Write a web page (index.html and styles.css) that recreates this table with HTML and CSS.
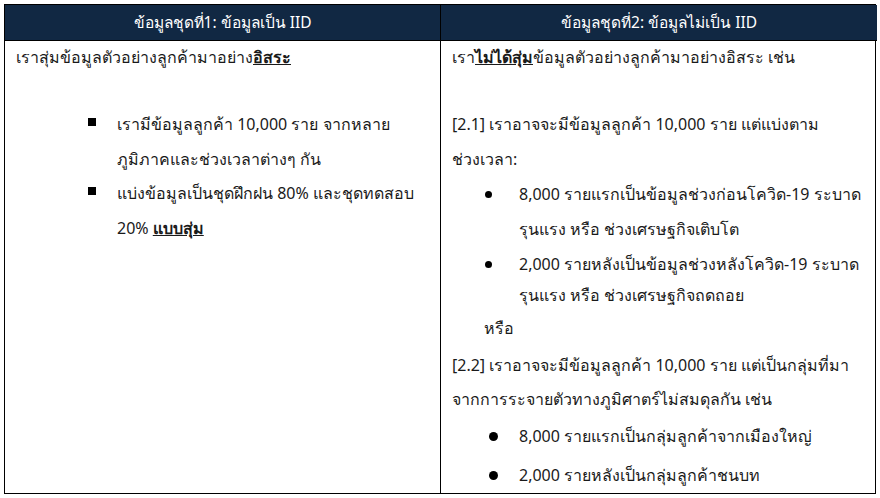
FILE: index.html
```html
<!DOCTYPE html>
<html lang="th">
<head>
<meta charset="utf-8">
<link rel="stylesheet" href="styles.css">
</head>
<body>
<div class="tbl">
  <div class="th th-left">ข้อมูลชุดที่1: ข้อมูลเป็น IID</div>
  <div class="th">ข้อมูลชุดที่2: ข้อมูลไม่เป็น IID</div>
  <div class="td td-left">
    <p class="intro">เราสุ่มข้อมูลตัวอย่างลูกค้ามาอย่าง<b class="u">อิสระ</b></p>
    <ul class="sq">
      <li>เรามีข้อมูลลูกค้า 10,000 ราย จากหลาย<br>ภูมิภาคและช่วงเวลาต่างๆ กัน</li>
      <li>แบ่งข้อมูลเป็นชุดฝึกฝน 80% และชุดทดสอบ<br>20% <b class="u">แบบสุ่ม</b></li>
    </ul>
  </div>
  <div class="td">
    <p class="intro">เรา<b class="u">ไม่ได้สุ่ม</b>ข้อมูลตัวอย่างลูกค้ามาอย่างอิสระ เช่น</p>
    <p class="para p21">[2.1] เราอาจจะมีข้อมูลลูกค้า 10,000 ราย แต่แบ่งตาม<br>ช่วงเวลา:</p>
    <ul class="dot dot1">
      <li>8,000 รายแรกเป็นข้อมูลช่วงก่อนโควิด-19 ระบาด<br>รุนแรง หรือ ช่วงเศรษฐกิจเติบโต</li>
      <li>2,000 รายหลังเป็นข้อมูลช่วงหลังโควิด-19 ระบาด<br>รุนแรง หรือ ช่วงเศรษฐกิจถดถอย</li>
    </ul>
    <p class="or">หรือ</p>
    <p class="para p22">[2.2] เราอาจจะมีข้อมูลลูกค้า 10,000 ราย แต่เป็นกลุ่มที่มา<br>จากการระจายตัวทางภูมิศาตร์ไม่สมดุลกัน เช่น</p>
    <ul class="dot dot2">
      <li>8,000 รายแรกเป็นกลุ่มลูกค้าจากเมืองใหญ่</li>
      <li>2,000 รายหลังเป็นกลุ่มลูกค้าชนบท</li>
    </ul>
  </div>
</div>
</body>
</html>
```
FILE: styles.css
```css
html, body {
  margin: 0;
  padding: 0;
  background: #ffffff;
}
body {
  padding: 4px 0 0 4px;
  font-family: "Noto Sans", "Liberation Sans", sans-serif;
  color: #1a1a1a;
}
.tbl {
  width: 872px;
  height: 490px;
  box-sizing: border-box;
  display: grid;
  grid-template-columns: 436px 436px;
  grid-template-rows: 36px 1fr;
  border: 1.5px solid #000;
}
.th {
  background: #112843;
  color: #fff;
  font-size: 15.5px;
  display: flex;
  align-items: center;
  justify-content: center;
  border-bottom: 1.5px solid #000;
}
.th-left, .td-left {
  border-right: 1.5px solid #000;
}
.td {
  padding: 0 0 0 11px;
  font-size: 16px;
  line-height: 35px;
}
p { margin: 0; }
.u { text-decoration: underline; font-weight: bold; }
.intro { line-height: 32px; margin-bottom: 34px; }
ul { margin: 0; padding: 0; list-style: none; }
li { position: relative; }
ul.sq { padding-left: 101px; }
ul.sq li { line-height: 34.5px; }
ul.sq li + li { line-height: 35px; }
ul.sq li::before {
  content: "";
  position: absolute;
  left: -29px;
  top: 11px;
  width: 8px;
  height: 8px;
  background: #000;
}
ul.dot { padding-left: 67px; }
ul.dot li::before {
  content: "";
  position: absolute;
  border-radius: 50%;
  background: #000;
}
ul.dot1 li { line-height: 34.5px; }
ul.dot1 li + li { line-height: 31px; margin-top: 3px; }
ul.dot1 li::before { width: 7px; height: 7px; left: -34px; top: 14px; }
ul.dot1 li + li::before { top: 12px; }
.or { padding-left: 32px; line-height: 32px; margin-top: 1px; }
.p22 { line-height: 34px; margin-top: 4px; }
ul.dot2 li { line-height: 37px; margin-top: 2px; }
ul.dot2 li::before { width: 9px; height: 9px; left: -30px; top: 14px; }
```
